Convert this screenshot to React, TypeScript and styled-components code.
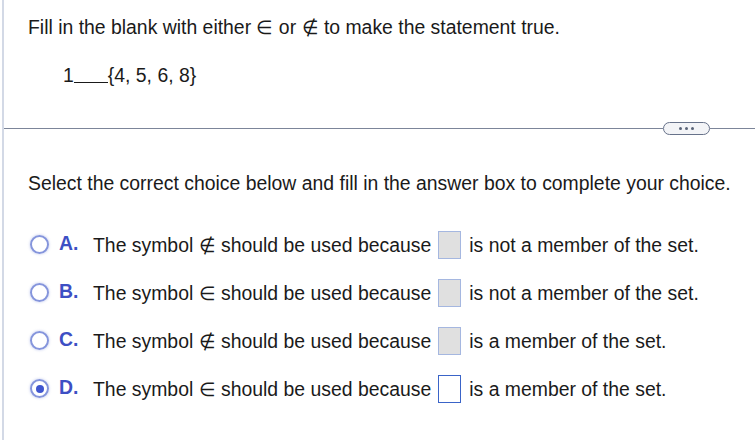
import styled, { createGlobalStyle } from 'styled-components';

const GlobalStyle = createGlobalStyle`
    html, body {
        margin: 0;
        padding: 0;
        background: #ffffff;
    }
    body {
        font-family: "Liberation Sans", Arial, sans-serif;
        color: #1a1a1a;
    }
`;

const Page = styled.div`
    width: 755px;
    height: 440px;
    box-sizing: border-box;
    border-left: 2px solid #d3d9e6;
    margin-left: 2px;
    overflow: hidden;
`;

const Question = styled.div`
    padding: 15px 0 0 24px;
    font-size: 19.4px;
    line-height: 24px;
`;

const Expression = styled.div`
    margin: 24px 0 0 59px;
    font-size: 19.4px;
    line-height: 24px;
`;

const Blank = styled.span`
    display: inline-block;
    width: 34px;
    border-bottom: 1px solid #1a1a1a;
    height: 19px;
    vertical-align: baseline;
    margin-bottom: -1px;
`;

const Divider = styled.div`
    margin-top: 35px;
    margin-left: -4px;
    display: flex;
    align-items: center;
    height: 13px;
`;

const Line = styled.div<{ $grow?: boolean }>`
    height: 1px;
    background: #7c8599;
    flex: ${({ $grow }) => ($grow ? '1' : '0 0 47px')};
`;

const MoreButton = styled.div`
    width: 45px;
    height: 11px;
    border: 1px solid #67728a;
    border-radius: 7px;
    background: #f3f4f7;
    display: flex;
    align-items: center;
    justify-content: center;
    gap: 3px;
`;

const Dot = styled.span`
    width: 3px;
    height: 3px;
    border-radius: 50%;
    background: #5a6478;
`;

const Instruction = styled.div`
    margin: 36px 0 0 24px;
    font-size: 19.4px;
    line-height: 24px;
`;

const Choices = styled.div`
    margin: 36px 0 0 26px;
    display: flex;
    flex-direction: column;
    gap: 20px;
`;

const Choice = styled.div`
    display: flex;
    align-items: center;
    height: 28px;
    font-size: 19.4px;
`;

const Radio = styled.span<{ $checked?: boolean }>`
    position: relative;
    width: 15px;
    height: 15px;
    border: 2px solid #8595dc;
    border-radius: 50%;
    box-shadow: 0 0 2px 1px rgba(133, 149, 220, 0.25);
    flex: none;
    margin-top: -1px;
    &::after {
        content: '';
        display: ${({ $checked }) => ($checked ? 'block' : 'none')};
        position: absolute;
        left: 3.5px;
        top: 3.5px;
        width: 8px;
        height: 8px;
        border-radius: 50%;
        background: #3f55cf;
    }
`;

const Letter = styled.span`
    margin-left: 10px;
    width: 34px;
    font-weight: bold;
    color: #3d4fc4;
    position: relative;
    top: -2px;
`;

const Text = styled.span`
    white-space: nowrap;
`;

const AnswerBox = styled.span<{ $active?: boolean }>`
    box-sizing: border-box;
    width: 23px;
    height: 28px;
    margin: 0 8px 0 7px;
    border: 1px solid ${({ $active }) => ($active ? '#3a64c8' : '#a5b7e0')};
    background: ${({ $active }) => ($active ? '#ffffff' : '#e0e0e0')};
    flex: none;
`;

const NOT_IN = '\u2209';
const IN = '\u2208';

const choices = [
    { letter: 'A.', symbol: NOT_IN, rest: 'is not a member of the set.' },
    { letter: 'B.', symbol: IN, rest: 'is not a member of the set.' },
    { letter: 'C.', symbol: NOT_IN, rest: 'is a member of the set.' },
    { letter: 'D.', symbol: IN, rest: 'is a member of the set.', selected: true },
];

const App = () => {
    return (
        <>
            <GlobalStyle />
            <Page>
                <Question>
                    Fill in the blank with either {IN} or {NOT_IN} to make the
                    statement true.
                </Question>
                <Expression>
                    1<Blank />
                    {'{4, 5, 6, 8}'}
                </Expression>

                <Divider>
                    <Line $grow />
                    <MoreButton>
                        <Dot />
                        <Dot />
                        <Dot />
                    </MoreButton>
                    <Line />
                </Divider>

                <Instruction>
                    Select the correct choice below and fill in the answer box to
                    complete your choice.
                </Instruction>

                <Choices>
                    {choices.map((c) => (
                        <Choice key={c.letter}>
                            <Radio $checked={c.selected} />
                            <Letter>{c.letter}</Letter>
                            <Text>
                                The symbol {c.symbol} should be used because
                            </Text>
                            <AnswerBox $active={c.selected} />
                            <Text>{c.rest}</Text>
                        </Choice>
                    ))}
                </Choices>
            </Page>
        </>
    );
};

export default App;
